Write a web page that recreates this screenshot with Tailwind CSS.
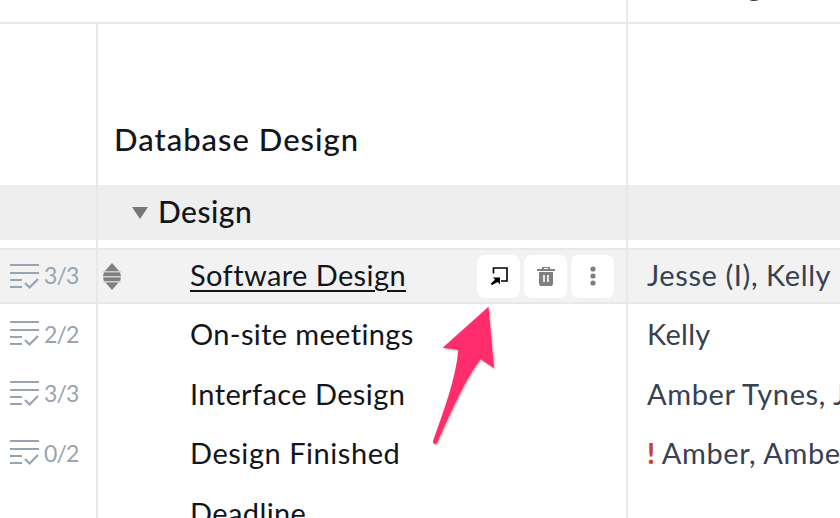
<!DOCTYPE html>
<html lang="en">
<head>
<meta charset="UTF-8">
<title>Database Design</title>
<script src="https://cdn.jsdelivr.net/npm/@tailwindcss/browser@4"></script>
</head>
<body class="bg-white overflow-hidden">
<div class="relative w-[840px] h-[518px] overflow-hidden font-['Lato',sans-serif] text-[#11151c]">

  <!-- top row -->
  <div class="grid grid-cols-[98px_530px_1fr] h-[24px] border-b-2 border-[#e8e8e8]">
    <div></div>
    <div class="border-r-2 border-[#e8e8e8]"></div>
    <div class="overflow-hidden pl-[119px]"><div class="-mt-[31px] text-[29px] leading-8 text-[#374151]">g</div></div>
  </div>

  <!-- title row -->
  <div class="grid grid-cols-[98px_530px_1fr] h-[161px]">
    <div class="border-r-2 border-[#e8e8e8]"></div>
    <div class="border-r-2 border-[#e8e8e8] flex items-end pl-4 pb-[28px]">
      <span class="text-[31px] leading-[36px] tracking-[1px] font-medium">Database Design</span>
    </div>
    <div></div>
  </div>

  <!-- group row -->
  <div class="grid grid-cols-[98px_530px_1fr] h-[55px] bg-[#eeeeee]">
    <div class="border-r-2 border-[#e8e8e8]"></div>
    <div class="border-r-2 border-[#e8e8e8] flex items-center pl-[34px] pb-[4px]">
      <svg class="w-4 h-3 mr-[10px] mt-[4px]" viewBox="0 0 16 12"><path d="M0 0H16L8 12Z" fill="#777"/></svg>
      <span class="text-[30px] leading-8 tracking-[0.5px] font-medium">Design</span>
    </div>
    <div></div>
  </div>

  <!-- spacer -->
  <div class="grid grid-cols-[98px_530px_1fr] h-[8px]">
    <div class="border-r-2 border-[#e8e8e8]"></div>
    <div class="border-r-2 border-[#e8e8e8]"></div>
    <div></div>
  </div>

  <!-- hovered row -->
  <div class="grid grid-cols-[98px_530px_1fr] h-[56px] bg-[#f2f2f2] border-y-2 border-[#e8e8e8]">
    <div class="border-r-2 border-[#e8e8e8] flex items-center pl-[10px] gap-[5px] text-[#9aa3b0]">
      <svg class="w-[29px] h-[25px]" viewBox="0 0 29 25"><path d="M0 1H29M0 9H29M0 16H12M0 23H12M15 19L19.5 23.5L28 15" fill="none" stroke="#9aa3b0" stroke-width="2.2"/></svg>
      <span class="text-[23px] tracking-[-0.9px] pb-[2px]">3/3</span>
    </div>
    <div class="border-r-2 border-[#e8e8e8] flex items-center">
      <svg class="w-[18px] h-[27px] ml-[5px] mr-[69px]" viewBox="0 0 18 27">
        <path d="M9 0L16 8Q18 10 18 13.5Q18 17 16 19L9 27L2 19Q0 17 0 13.5Q0 10 2 8Z" fill="#808080"/>
        <path d="M0 8.7H18M0 13.7H18M0 18.7H18" stroke="#cfcfcf" stroke-width="1.6"/>
      </svg>
      <span class="text-[29px] leading-8 tracking-[0.4px] underline underline-offset-4 decoration-2 w-[287px] pb-[2px] whitespace-nowrap">Software Design</span>
      <div class="flex gap-1">
        <button class="w-[43px] h-[43px] rounded-lg bg-white flex items-center justify-center">
          <svg class="w-[18px] h-[18px]" viewBox="0 0 18 18"><path d="M3.5 6.5V1H17V14H11" fill="none" stroke="#000" stroke-width="1.6"/><path d="M0.5 17L5 12.5L2.8 10.5H10V17.5L7.8 15L2 18Z" fill="#000"/></svg>
        </button>
        <button class="w-[43px] h-[43px] rounded-lg bg-white flex items-center justify-center">
          <svg class="w-[18px] h-[20px]" viewBox="0 0 18 20"><path d="M0 3H5V1H13V3H18V5H0ZM7 2V3H11V2ZM2 6H16V18L15 20H3L2 18Z" fill="#808080" fill-rule="evenodd"/><path d="M7 9V16M11 9V16" stroke="#fff" stroke-width="1.6"/></svg>
        </button>
        <button class="w-[43px] h-[43px] rounded-lg bg-white flex items-center justify-center">
          <svg class="w-[6px] h-[20px]" viewBox="0 0 6 20"><circle cx="3" cy="3" r="2.6" fill="#808080"/><circle cx="3" cy="10" r="2.6" fill="#808080"/><circle cx="3" cy="17" r="2.6" fill="#808080"/></svg>
        </button>
      </div>
    </div>
    <div class="flex items-center pl-[19px] pb-[2px] text-[29px] tracking-[0.6px] text-[#374151] whitespace-nowrap">Jesse (I), Kelly</div>
  </div>

  <!-- plain rows -->
  <div class="grid grid-cols-[98px_530px_1fr] h-[59.5px]">
    <div class="border-r-2 border-[#e8e8e8] flex items-center pl-[10px] gap-[5px] text-[#9aa3b0]">
      <svg class="w-[29px] h-[25px]" viewBox="0 0 29 25"><path d="M0 1H29M0 9H29M0 16H12M0 23H12M15 19L19.5 23.5L28 15" fill="none" stroke="#9aa3b0" stroke-width="2.2"/></svg>
      <span class="text-[23px] tracking-[-0.9px]">2/2</span>
    </div>
    <div class="border-r-2 border-[#e8e8e8] flex items-center pl-[92px] text-[29px] tracking-[0.35px]">On-site meetings</div>
    <div class="flex items-center pl-[19px] text-[29px] tracking-[0.3px] text-[#374151] whitespace-nowrap">Kelly</div>
  </div>
  <div class="grid grid-cols-[98px_530px_1fr] h-[59.5px]">
    <div class="border-r-2 border-[#e8e8e8] flex items-center pl-[10px] gap-[5px] text-[#9aa3b0]">
      <svg class="w-[29px] h-[25px]" viewBox="0 0 29 25"><path d="M0 1H29M0 9H29M0 16H12M0 23H12M15 19L19.5 23.5L28 15" fill="none" stroke="#9aa3b0" stroke-width="2.2"/></svg>
      <span class="text-[23px] tracking-[-0.9px]">3/3</span>
    </div>
    <div class="border-r-2 border-[#e8e8e8] flex items-center pl-[92px] text-[29px] tracking-[0.4px]">Interface Design</div>
    <div class="flex items-center pl-[19px] text-[29px] tracking-[0.6px] text-[#374151] whitespace-nowrap">Amber Tynes, Jesse</div>
  </div>
  <div class="grid grid-cols-[98px_530px_1fr] h-[59.5px]">
    <div class="border-r-2 border-[#e8e8e8] flex items-center pl-[10px] gap-[5px] text-[#9aa3b0]">
      <svg class="w-[29px] h-[25px]" viewBox="0 0 29 25"><path d="M0 1H29M0 9H29M0 16H12M0 23H12M15 19L19.5 23.5L28 15" fill="none" stroke="#9aa3b0" stroke-width="2.2"/></svg>
      <span class="text-[23px] tracking-[-0.9px]">0/2</span>
    </div>
    <div class="border-r-2 border-[#e8e8e8] flex items-center pl-[92px] text-[29px] tracking-[0.55px]">Design Finished</div>
    <div class="flex items-center pl-[19px] text-[29px] tracking-[0.6px] text-[#374151] whitespace-nowrap"><span class="text-[#c9412f] font-bold mr-[6px]">!</span>Amber, Amber Tynes</div>
  </div>
  <div class="grid grid-cols-[98px_530px_1fr] h-[59.5px]">
    <div class="border-r-2 border-[#e8e8e8]"></div>
    <div class="border-r-2 border-[#e8e8e8] flex items-center pl-[92px] text-[29px] tracking-[0.4px]">Deadline</div>
    <div></div>
  </div>

  <!-- annotation arrow -->
  <svg class="absolute left-[425px] top-[300px] w-[80px] h-[155px] drop-shadow-[1px_1px_1px_rgba(0,0,0,0.3)]" viewBox="425 300 80 155">
    <path d="M488.5 306.7L494 368.3L480.7 359.3C466 378 452 410 437 443C435.5 445 432.5 444 433 441C444 410 456 378 458.3 350L442.7 347.7Z" fill="#ff2d6b"/>
  </svg>
</div>
</body>
</html>
